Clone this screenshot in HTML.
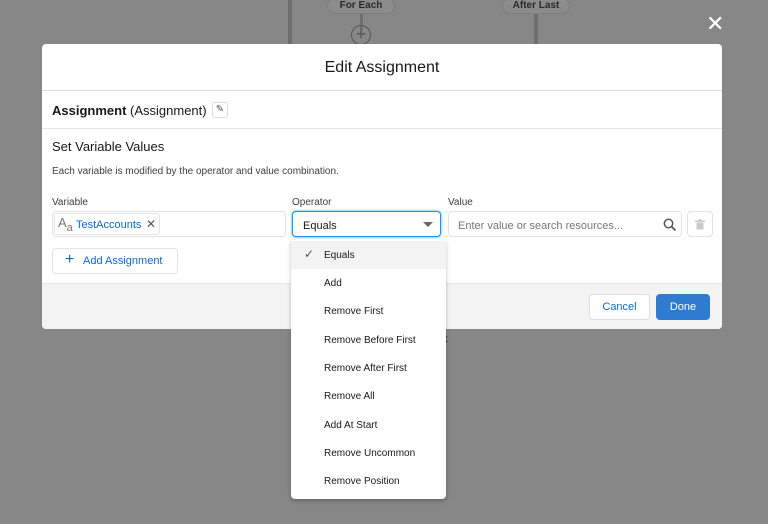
<!DOCTYPE html>
<html><head><style>
*{box-sizing:border-box;margin:0;padding:0}
body{width:768px;height:524px;background:#878787;font-family:"Liberation Sans",sans-serif;position:relative;overflow:hidden;color:#181818}
.a{position:absolute}
.pill{background:#8c8c8c;border:1px solid #7d7d7d;border-radius:10px;font-size:10px;font-weight:bold;color:#2a2a2a;text-align:center;height:16px;line-height:14px}
.modal{left:42px;top:44px;width:680px;height:285px;background:#fff;border-radius:4px;overflow:hidden}
.lbl{font-size:10px;color:#3e3e3c}
.inp{border:1px solid #e3e3e3;border-radius:4px;height:26px;background:#fff}
.dd{left:291px;top:239px;width:155px;height:260px;background:#fff;border-radius:4px;box-shadow:0 2px 4px rgba(0,0,0,.25)}
.it{position:absolute;left:33px;font-size:10px;color:#181818}
</style></head><body>
<div class="a" style="left:288px;top:0;width:4px;height:44px;background:#6e6e6e"></div>
<div class="a" style="left:360px;top:10px;width:3px;height:20px;background:#6e6e6e"></div>
<div class="a" style="left:534px;top:10px;width:4px;height:34px;background:#6e6e6e"></div>
<div class="a pill" style="left:327px;top:-2px;width:68px">For Each</div>
<div class="a pill" style="left:502px;top:-2px;width:68px">After Last</div>
<div class="a" style="left:351px;top:25px;width:20px;height:20px;border:1.5px solid #555;border-radius:50%;color:#555;font-size:18px;line-height:16px;text-align:center">+</div>
<div class="a" style="left:706px;top:10px;color:#fff;font-size:22px;line-height:28px">✕</div>

<div class="a modal">
 <div class="a" style="left:0;top:0;width:680px;height:47px;border-bottom:1px solid #ddd;text-align:center;font-size:16px;line-height:48px">Edit Assignment</div>
 <div class="a" style="left:0;top:47px;width:680px;height:38px;border-bottom:1px solid #e5e5e5"></div>
 <div class="a" style="left:10px;top:59px;font-size:13px"><b>Assignment</b> (Assignment)</div>
 <div class="a" style="left:170px;top:58px;width:16px;height:16px;border:1px solid #ddd;border-radius:3px;font-size:10px;text-align:center;line-height:14px;color:#555">✎</div>
 <div class="a" style="left:10px;top:95px;font-size:13px">Set Variable Values</div>
 <div class="a" style="left:10px;top:122px;font-size:10px;color:#3e3e3c">Each variable is modified by the operator and value combination.</div>
 <div class="a lbl" style="left:10px;top:153px">Variable</div>
 <div class="a lbl" style="left:250px;top:153px">Operator</div>
 <div class="a lbl" style="left:406px;top:153px">Value</div>
 <div class="a inp" style="left:10px;top:167px;width:234px"></div>
 <div class="a" style="left:12px;top:169px;width:106px;height:22px;border:1px solid #e3e3e3;border-radius:3px"></div>
 <div class="a" style="left:16px;top:171px;font-size:13px;color:#777">A<span style="font-size:11px;position:relative;top:4px">a</span></div>
 <div class="a" style="left:34px;top:175px;font-size:11px;color:#0b6bcb">TestAccounts</div>
 <div class="a" style="left:104px;top:173px;font-size:12px;color:#555">✕</div>
 <div class="a inp" style="left:250px;top:167px;width:149px;border-color:#1b96ff;box-shadow:0 0 2px #1b96ff"></div>
 <div class="a" style="left:261px;top:176px;font-size:11px">Equals</div>
 <div class="a" style="left:381px;top:178px;width:0;height:0;border-left:5px solid transparent;border-right:5px solid transparent;border-top:5px solid #666"></div>
 <div class="a inp" style="left:406px;top:167px;width:234px"></div>
 <div class="a" style="left:416px;top:176px;font-size:11px;color:#777">Enter value or search resources...</div>
 <svg class="a" style="left:621px;top:174px" width="14" height="14"><circle cx="5.5" cy="5.5" r="4.2" fill="none" stroke="#555" stroke-width="1.5"/><line x1="8.5" y1="8.5" x2="12.5" y2="12.5" stroke="#555" stroke-width="1.6"/></svg>
 <div class="a inp" style="left:645px;top:167px;width:26px"></div>
 <svg class="a" style="left:653px;top:175px" width="10" height="11"><rect x="0" y="1.5" width="10" height="1.5" fill="#c9c9c9"/><rect x="3.5" y="0" width="3" height="2" fill="#c9c9c9"/><rect x="1.5" y="3.5" width="7" height="7" fill="#c9c9c9"/></svg>
 <div class="a inp" style="left:10px;top:204px;width:126px;height:26px"></div>
 <div class="a" style="left:23px;top:207px;font-size:16px;color:#0b6bcb">+</div>
 <div class="a" style="left:41px;top:211px;font-size:11px;color:#0b6bcb">Add Assignment</div>
 <div class="a" style="left:0;top:239px;width:680px;height:46px;background:#f3f3f3;border-top:1px solid #e5e5e5"></div>
 <div class="a" style="left:547px;top:250px;width:61px;height:26px;border:1px solid #ddd;border-radius:4px;background:#fff;color:#0b6bcb;font-size:11px;text-align:center;line-height:24px">Cancel</div>
 <div class="a" style="left:614px;top:250px;width:54px;height:26px;border-radius:4px;background:#2f7bd0;color:#fff;font-size:11px;text-align:center;line-height:26px">Done</div>
</div>
<div class="a" style="left:444px;top:334px;font-size:10px;font-weight:bold;color:#222">t</div>

<div class="a dd">
 <div class="a" style="left:0;top:2px;width:155px;height:28px;background:#f3f3f3"></div>
 <div class="a" style="left:13px;top:8px;font-size:12px;color:#555">✓</div>
 <div class="it" style="top:11px">Equals</div>
 <div class="it" style="top:39px">Add</div>
 <div class="it" style="top:67px">Remove First</div>
 <div class="it" style="top:96px">Remove Before First</div>
 <div class="it" style="top:124px">Remove After First</div>
 <div class="it" style="top:152px">Remove All</div>
 <div class="it" style="top:181px">Add At Start</div>
 <div class="it" style="top:209px">Remove Uncommon</div>
 <div class="it" style="top:237px">Remove Position</div>
</div>
</body></html>
